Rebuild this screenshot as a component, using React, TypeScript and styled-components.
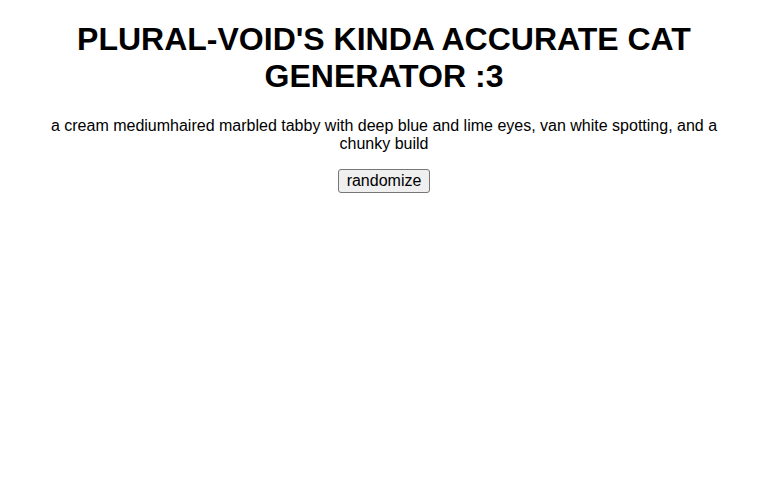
import React, { useState } from "react";
import styled, { createGlobalStyle } from "styled-components";

const GlobalStyle = createGlobalStyle`
  html, body {
    margin: 0;
    padding: 0;
    background: #ffffff;
    color: #000000;
    font-family: "Liberation Sans", Arial, sans-serif;
  }
`;

const Page = styled.main`
  text-align: center;
  padding: 0 32px;
`;

const Title = styled.h1`
  font-size: 32px;
  font-weight: bold;
  margin: 21.44px 0;
`;

const Description = styled.p`
  font-size: 16px;
  margin: 16px 0;
`;

const RandomizeButton = styled.button`
  font-family: "Liberation Sans", Arial, sans-serif;
  font-size: 16px;
  color: #000000;
  background: #efefef;
  border: 1px solid #767676;
  border-radius: 3px;
  padding: 2px 8px;
  cursor: pointer;
`;

const coats = ["cream", "black", "silver", "ginger", "lilac", "chocolate"];
const lengths = ["mediumhaired", "shorthaired", "longhaired"];
const patterns = ["marbled tabby", "mackerel tabby", "solid", "tortoiseshell"];
const eyes = ["deep blue and lime", "amber", "copper", "green"];
const spotting = ["van white spotting", "mitted white spotting", "no white"];
const builds = ["chunky", "slender", "average"];

const pick = (list: string[]) => list[Math.floor(Math.random() * list.length)];

export default function App() {
  const [cat, setCat] = useState(
    "a cream mediumhaired marbled tabby with deep blue and lime eyes, van white spotting, and a chunky build"
  );

  const randomize = () => {
    setCat(
      `a ${pick(coats)} ${pick(lengths)} ${pick(patterns)} with ${pick(eyes)} eyes, ${pick(spotting)}, and a ${pick(builds)} build`
    );
  };

  return (
    <Page>
      <GlobalStyle />
      <Title>PLURAL-VOID'S KINDA ACCURATE CAT GENERATOR :3</Title>
      <Description>{cat}</Description>
      <RandomizeButton onClick={randomize}>randomize</RandomizeButton>
    </Page>
  );
}
